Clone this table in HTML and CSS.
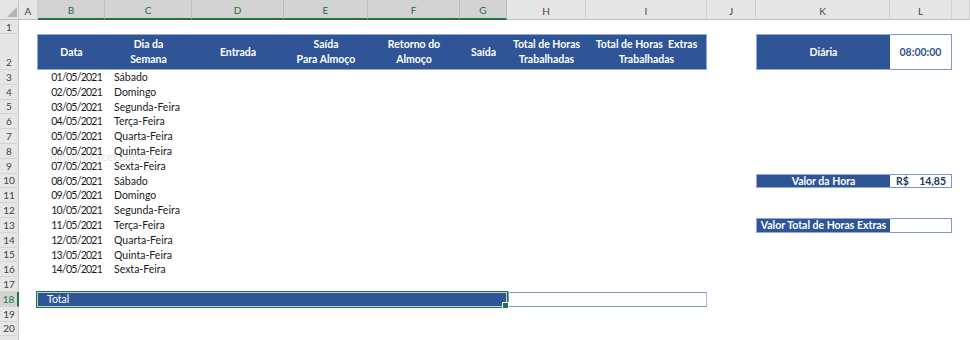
FILE: index.html
```html
<!DOCTYPE html>
<html lang="pt-BR">
<head>
<meta charset="utf-8">
<title>Controle de Horas</title>
<link rel="stylesheet" href="styles.css">
</head>
<body>
<div class="sheet">
  <!-- column headers -->
  <div class="corner"><svg width="19" height="20" viewBox="0 0 19 20"><polygon points="7,17 17,17 17,7" fill="#b4b4b4"/></svg></div>
  <div class="colh">A</div>
  <div class="colh sel">B</div>
  <div class="colh sel">C</div>
  <div class="colh sel">D</div>
  <div class="colh sel">E</div>
  <div class="colh sel">F</div>
  <div class="colh sel">G</div>
  <div class="colh">H</div>
  <div class="colh">I</div>
  <div class="colh">J</div>
  <div class="colh">K</div>
  <div class="colh">L</div>
  <div class="colh"></div>

  <!-- row 1 -->
  <div class="rowh">1</div>

  <!-- row 2 -->
  <div class="rowh tall">2</div>
  <div class="hdr">
    <div class="hc">Data</div>
    <div class="hc">Dia da<br>Semana</div>
    <div class="hc">Entrada</div>
    <div class="hc">Saída<br>Para Almoço</div>
    <div class="hc">Retorno do<br>Almoço</div>
    <div class="hc">Saída</div>
    <div class="hc">Total de Horas<br>Trabalhadas</div>
    <div class="hc">Total de Horas&nbsp; Extras<br>Trabalhadas</div>
  </div>
  <div class="kbox tall-box">Diária</div>
  <div class="lbox tall-box">08:00:00</div>

  <div class="rowh">3</div><div class="date">01/05/2021</div><div class="day">Sábado</div>
  <div class="rowh">4</div><div class="date">02/05/2021</div><div class="day">Domingo</div>
  <div class="rowh">5</div><div class="date">03/05/2021</div><div class="day">Segunda-Feira</div>
  <div class="rowh">6</div><div class="date">04/05/2021</div><div class="day">Terça-Feira</div>
  <div class="rowh">7</div><div class="date">05/05/2021</div><div class="day">Quarta-Feira</div>
  <div class="rowh">8</div><div class="date">06/05/2021</div><div class="day">Quinta-Feira</div>
  <div class="rowh">9</div><div class="date">07/05/2021</div><div class="day">Sexta-Feira</div>
  <div class="rowh">10</div><div class="date">08/05/2021</div><div class="day">Sábado</div>
  <div class="kbox">Valor da Hora</div>
  <div class="lbox money"><span>R$</span><span>14,85</span></div>
  <div class="rowh">11</div><div class="date">09/05/2021</div><div class="day">Domingo</div>
  <div class="rowh">12</div><div class="date">10/05/2021</div><div class="day">Segunda-Feira</div>
  <div class="rowh">13</div><div class="date">11/05/2021</div><div class="day">Terça-Feira</div>
  <div class="kbox">Valor Total de Horas Extras</div>
  <div class="lbox"></div>
  <div class="rowh">14</div><div class="date">12/05/2021</div><div class="day">Quarta-Feira</div>
  <div class="rowh">15</div><div class="date">13/05/2021</div><div class="day">Quinta-Feira</div>
  <div class="rowh">16</div><div class="date">14/05/2021</div><div class="day">Sexta-Feira</div>
  <div class="rowh">17</div>
  <div class="rowh rsel">18</div>
  <div class="total">Total</div>
  <div class="total-val"></div>
  <div class="rowh">19</div>
  <div class="rowh">20</div>
  <div class="rowh"></div>

  <div class="watermark">ninjadoexcel.com.br</div>
</div>
</body>
</html>
```

FILE: styles.css
```css
* { box-sizing: border-box; }
html, body { margin: 0; padding: 0; background: #fff; }
body {
  font-family: Lato, "Open Sans", sans-serif;
  font-size: 10.5px;
  color: #1a1a1a;
  overflow: hidden;
}

.sheet {
  position: relative;
  display: grid;
  grid-template-columns: 19px 19px 67px 87px 92px 84px 92px 47px 79px 121px 49px 134px 62px 18px;
  grid-template-rows: 20px 14px 36px repeat(19, 14.8px);
  width: 970px;
  height: 340px;
  overflow: hidden;
}

.corner {
  grid-column: 1;
  background: #e6e6e6;
  border-right: 1px solid #c8c8c8;
  border-bottom: 1px solid #bdbdbd;
  line-height: 0;
}

.colh {
  background: #e6e6e6;
  border-right: 1px solid #cfcfcf;
  border-bottom: 1px solid #bdbdbd;
  color: #444;
  font-size: 10px;
  display: flex;
  align-items: center;
  justify-content: center;
  padding-top: 2px;
}
.colh.sel {
  background: #d3d3d3;
  border-right-color: #bdbdbd;
  border-bottom: 2px solid #217346;
  color: #2d6a45;
}

.rowh {
  grid-column: 1;
  background: #e6e6e6;
  border-right: 1px solid #c8c8c8;
  border-bottom: 1px solid #d4d4d4;
  color: #444;
  font-size: 10px;
  display: flex;
  align-items: center;
  justify-content: center;
}
.rowh.tall { align-items: flex-end; padding-bottom: 1px; }
.rowh.rsel {
  background: #d3d3d3;
  color: #217346;
  border-right: 2px solid #217346;
}

.hdr {
  grid-column: 3 / 11;
  display: grid;
  grid-template-columns: 67px 87px 92px 84px 92px 47px 79px 121px;
  background: #2f5597;
  border: 1px solid #8ea9db;
  margin-left: -1px;
  color: #fff;
  font-weight: 700;
  font-size: 10.5px;
  line-height: 15px;
}
.hc {
  display: flex;
  align-items: center;
  justify-content: center;
  text-align: center;
  white-space: nowrap;
}

.date {
  grid-column: 3;
  text-align: right;
  padding-right: 3px;
  line-height: 14.8px;
  white-space: nowrap;
  letter-spacing: -0.75px;
}
.day {
  grid-column: 4;
  padding-left: 9px;
  line-height: 14.8px;
  white-space: nowrap;
}

.kbox {
  grid-column: 12;
  background: #2f5597;
  color: #fff;
  font-weight: 700;
  display: flex;
  align-items: center;
  justify-content: center;
  white-space: nowrap;
  border: 1px solid #8ea9db;
  border-right: none;
}
.lbox {
  grid-column: 13;
  background: #fff;
  border: 1px solid #7f97c8;
  border-left: none;
  color: #2f5597;
  font-weight: 700;
  display: flex;
  align-items: center;
  justify-content: center;
}
.lbox.money {
  justify-content: space-between;
  padding: 0 5px 0 6px;
  color: #203864;
}

.total {
  grid-column: 3 / 9;
  background: #2f5597;
  color: #fff;
  padding-left: 9px;
  display: flex;
  align-items: center;
  border: 1px solid #b9d8c2;
  outline: 1px solid #217346;
  position: relative;
  margin-left: -1px;
}
.total::after {
  content: "";
  position: absolute;
  right: -3px;
  bottom: -3px;
  width: 5px;
  height: 5px;
  background: #217346;
  border: 1px solid #fff;
}
.total-val {
  grid-column: 9 / 11;
  border: 1px solid #7f97c8;
  border-right-color: #a9bce0;
  margin-left: 1px;
}

.watermark {
  position: absolute;
  left: 50px;
  top: 150px;
  font-size: 11.5px;
  color: rgba(150, 150, 150, 0.3);
  letter-spacing: 0.3px;
  pointer-events: none;
}
```
